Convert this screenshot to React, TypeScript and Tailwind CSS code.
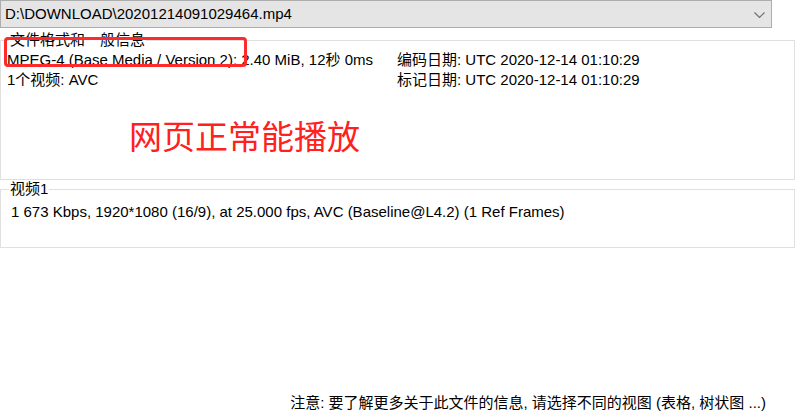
export default function App() {
  const font = { fontFamily: '"Liberation Sans", "Noto Sans CJK SC", sans-serif' };
  return (
    <div style={font} className="relative flex h-[414px] w-[798px] flex-col overflow-hidden bg-white text-[15px] text-black">
      <div className="flex h-[28px] w-[772px] items-center justify-between border border-[#adadad] bg-[#e5e5e5] pl-[4px] pr-[6px]">
        <span className="leading-5">D:\DOWNLOAD\20201214091029464.mp4</span>
        <svg width="11" height="7" viewBox="0 0 11 7" className="mt-[2px]">
          <polyline points="0.5,0.5 5.5,5.5 10.5,0.5" fill="none" stroke="#707070" strokeWidth="1.2" />
        </svg>
      </div>

      <fieldset className="mt-[4px] h-[148px] w-[795px] border border-[#e0e0e0]">
        <legend className="ml-[8px] px-[1px] text-[15px] leading-4">文件格式和一般信息</legend>
        <div className="grid grid-cols-[396px_1fr] pt-[2px] leading-5">
          <div className="pl-[6px]">
            <div>
              MPEG-4 (Base Media / Version 2): 2.40 MiB, 12秒 0ms
            </div>
            <div>1个视频: AVC</div>
          </div>
          <div>
            <div>编码日期: UTC 2020-12-14 01:10:29</div>
            <div>标记日期: UTC 2020-12-14 01:10:29</div>
          </div>
        </div>
      </fieldset>

      <fieldset className="mt-[1px] h-[67px] w-[795px] border border-[#e0e0e0]">
        <legend className="ml-[8px] px-[1px] text-[15px] leading-4">视频1</legend>
        <div className="pl-[10px] pt-[5px] leading-5">
          1 673 Kbps, 1920*1080 (16/9), at 25.000 fps, AVC (Baseline@L4.2) (1 Ref Frames)
        </div>
      </fieldset>

      <div className="mt-auto flex justify-end pb-[1px] pr-[32px] text-[15px] leading-5">
        注意: 要了解更多关于此文件的信息, 请选择不同的视图 (表格, 树状图 ...)
      </div>

      <div className="absolute left-[4px] top-[37px] h-[30px] w-[243px] rounded-[4px] border-[3px] border-[#ff2a2a]" />
      <div className="absolute left-[129px] top-[118px] text-[33px] leading-10 text-[#ff2020]">网页正常能播放</div>
    </div>
  );
}
